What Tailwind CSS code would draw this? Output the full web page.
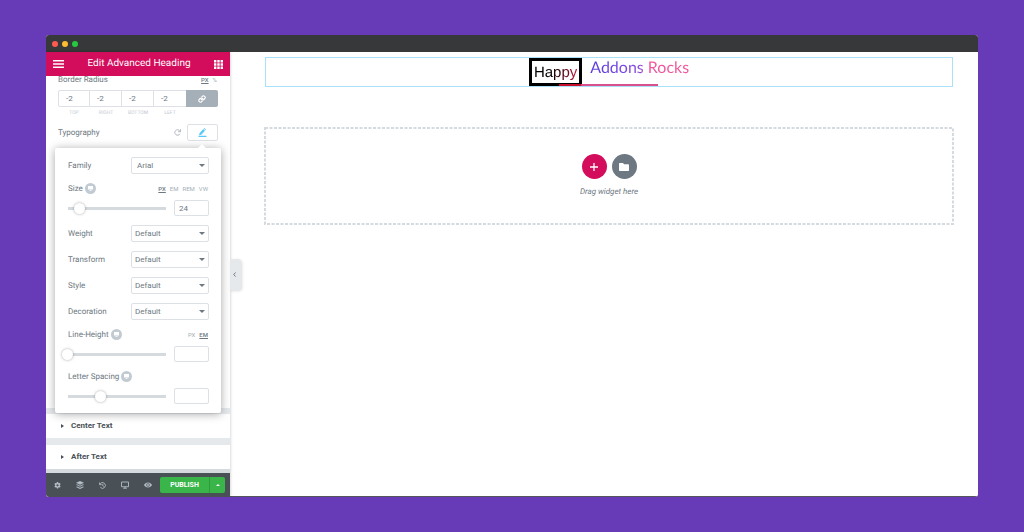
<!DOCTYPE html>
<html lang="en">
<head>
    <meta charset="UTF-8">
    <meta name="viewport" content="width=device-width, initial-scale=1.0">
    <title>Edit Advanced Heading</title>
    <script src="https://cdn.jsdelivr.net/npm/@tailwindcss/browser@4"></script>
</head>
<body class="flex min-h-screen bg-[#673ab7] px-[46px] py-[35px] font-[Roboto,sans-serif] text-[8px] leading-[12px] text-[#6d7882] [text-rendering:geometricPrecision]">
    <div class="flex flex-1 flex-col overflow-hidden rounded-[3px] bg-white">
        <!-- window bar -->
        <div class="flex h-[17px] items-center gap-[4px] bg-[#37383a] pl-[6px]">
            <span class="size-[6px] rounded-full bg-[#ff5a52]"></span>
            <span class="size-[6px] rounded-full bg-[#fdbc2e]"></span>
            <span class="size-[6px] rounded-full bg-[#27c840]"></span>
        </div>

        <div class="flex flex-1">
            <!-- editor panel -->
            <aside class="relative z-10 flex w-[184px] flex-col bg-white shadow-[0_0_3px_rgba(0,0,0,0.25)]">
                <header class="z-10 flex h-[24px] items-center justify-between bg-[#d30c5c] px-[7px] text-white">
                    <button aria-label="Menu">
                        <svg class="h-[8px] w-[11px]" viewBox="0 0 11 8" fill="currentColor"><path d="M0 0h11v1.500H0zM0 3.200h11v1.500H0zM0 6.400h11v1.500H0z"/></svg>
                    </button>
                    <h1 class="text-[10px]">Edit Advanced Heading</h1>
                    <button aria-label="Widgets">
                        <svg class="size-[9px]" viewBox="0 0 9 9" fill="currentColor"><path d="M0 0h2.400v2.400H0zM3.300 0h2.400v2.400H3.300zM6.600 0H9v2.400H6.600zM0 3.300h2.400v2.400H0zM3.300 3.300h2.400v2.400H3.300zM6.600 3.300H9v2.400H6.600zM0 6.600h2.400V9H0zM3.300 6.600h2.400V9H3.300zM6.600 6.600H9V9H6.600z"/></svg>
                    </button>
                </header>

                <section class="-mt-[2px] h-[334px] px-[12px]">
                    <div class="flex h-[12px] items-center justify-between">
                        <span>Border Radius</span>
                        <span class="flex gap-[4px] pr-[1px] text-[6px] text-[#a4afb7]">
                            <button class="font-medium text-[#6d7882] underline">PX</button>
                            <button>%</button>
                        </span>
                    </div>
                    <div class="mt-[4px] grid grid-cols-5 text-center text-[5px] leading-[12px] text-[#c2cbd2]">
                        <label><input class="block h-[17px] w-full rounded-l-[2px] border border-[#dde1e5] pl-[7px] text-[8px] text-[#6d7882]" value="-2">TOP</label>
                        <label><input class="block h-[17px] w-full border-y border-r border-[#dde1e5] pl-[7px] text-[8px] text-[#6d7882]" value="-2">RIGHT</label>
                        <label><input class="block h-[17px] w-full border-y border-r border-[#dde1e5] pl-[7px] text-[8px] text-[#6d7882]" value="-2">BOTTOM</label>
                        <label><input class="block h-[17px] w-full border-y border-[#dde1e5] pl-[7px] text-[8px] text-[#6d7882]" value="-2">LEFT</label>
                        <button class="flex h-[17px] items-center justify-center rounded-r-[2px] bg-[#a4afb7] text-white" aria-label="Link values">
                            <svg class="size-[8px]" viewBox="0 0 24 24" fill="none" stroke="currentColor" stroke-width="3.500" stroke-linecap="round"><path d="M10 13a5 5 0 0 0 7.500.5l3-3a5 5 0 0 0-7-7l-1.700 1.700M14 11a5 5 0 0 0-7.500-.5l-3 3a5 5 0 0 0 7 7l1.700-1.700"/></svg>
                        </button>
                    </div>

                    <div class="relative mt-[5px] flex h-[17px] items-center">
                        <span class="flex-1">Typography</span>
                        <button class="mr-[6px] text-[#a4afb7]" aria-label="Reset">
                            <svg class="size-[7px]" viewBox="0 0 14 14" fill="none" stroke="currentColor" stroke-width="1.700"><path d="M12 9.500A5.500 5.500 0 1 1 11.500 3.600"/><path d="M13 .5v5H8"/></svg>
                        </button>
                        <button class="flex h-[17px] w-[31px] items-center justify-center rounded-[2px] border border-[#dde1e5] text-[#5bc8f5]" aria-label="Edit typography">
                            <svg class="size-[9px]" viewBox="0 0 18 18" fill="currentColor"><path d="M3 10.500 10.500 2l3.500 3.500L6.500 13.500l-4.300.8zM11.300 1.200 12.500 0 16 3.500l-1.200 1.200zM1 15.500h16V18H1z"/></svg>
                        </button>

                        <!-- typography popover -->
                        <div class="absolute top-[24px] -right-[3px] -left-[3px] flex flex-col gap-[9px] rounded-[2px] bg-white py-[9px] pr-[12px] pl-[13px] shadow-[0_1px_10px_rgba(0,0,0,0.35)]">
                            <span class="absolute -top-[4px] right-[14px] border-x-[5px] border-b-[5px] border-x-transparent border-b-white"></span>
                            <div class="flex h-[17px] items-center justify-between">
                                <label for="family">Family</label>
                                <span class="relative">
                                    <select id="family" class="block h-[17px] w-[78px] appearance-none rounded-[2px] border border-[#dde1e5] bg-white pl-[5px]"><option>Arial</option></select>
                                    <span class="pointer-events-none absolute top-[7px] right-[4px] border-x-[3px] border-t-[3px] border-x-transparent border-t-[#6d7882]"></span>
                                </span>
                            </div>

                            <div>
                                <div class="flex h-[11px] items-center">
                                    <label for="size">Size</label>
                                    <button class="ml-[2px] flex size-[11px] items-center justify-center rounded-full bg-[#c2cbd2] text-white" aria-label="Device">
                                        <svg class="size-[5px]" viewBox="0 0 10 10" fill="currentColor"><path d="M0 0h10v7H0zM3 8h4v1.500H3z"/></svg>
                                    </button>
                                    <span class="ml-auto flex gap-[4px] pr-[1px] text-[6px] text-[#a4afb7]">
                                        <button class="font-medium text-[#6d7882] underline">PX</button>
                                        <button>EM</button>
                                        <button>REM</button>
                                        <button>VW</button>
                                    </span>
                                </div>
                                <div class="mt-[6px] flex h-[16px] items-center justify-between">
                                    <input id="size" type="range" value="12" class="-ml-[6px] h-[13px] w-[110px] appearance-none bg-[linear-gradient(#d5dadf,#d5dadf)] bg-[length:98px_3px] bg-center bg-no-repeat [&::-webkit-slider-thumb]:size-[11px] [&::-webkit-slider-thumb]:appearance-none [&::-webkit-slider-thumb]:rounded-full [&::-webkit-slider-thumb]:bg-white [&::-webkit-slider-thumb]:shadow-[0_0_3px_rgba(0,0,0,0.35)]">
                                    <input aria-label="Size value" value="24" class="h-[16px] w-[35px] rounded-[2px] border border-[#dde1e5] px-[4px]">
                                </div>
                            </div>

                            <div class="flex h-[17px] items-center justify-between">
                                <label for="weight">Weight</label>
                                <span class="relative">
                                    <select id="weight" class="block h-[17px] w-[78px] appearance-none rounded-[2px] border border-[#dde1e5] bg-white pl-[3px]"><option>Default</option></select>
                                    <span class="pointer-events-none absolute top-[7px] right-[4px] border-x-[3px] border-t-[3px] border-x-transparent border-t-[#6d7882]"></span>
                                </span>
                            </div>
                            <div class="flex h-[17px] items-center justify-between">
                                <label for="transform">Transform</label>
                                <span class="relative">
                                    <select id="transform" class="block h-[17px] w-[78px] appearance-none rounded-[2px] border border-[#dde1e5] bg-white pl-[3px]"><option>Default</option></select>
                                    <span class="pointer-events-none absolute top-[7px] right-[4px] border-x-[3px] border-t-[3px] border-x-transparent border-t-[#6d7882]"></span>
                                </span>
                            </div>
                            <div class="flex h-[17px] items-center justify-between">
                                <label for="style">Style</label>
                                <span class="relative">
                                    <select id="style" class="block h-[17px] w-[78px] appearance-none rounded-[2px] border border-[#dde1e5] bg-white pl-[3px]"><option>Default</option></select>
                                    <span class="pointer-events-none absolute top-[7px] right-[4px] border-x-[3px] border-t-[3px] border-x-transparent border-t-[#6d7882]"></span>
                                </span>
                            </div>
                            <div class="flex h-[17px] items-center justify-between">
                                <label for="decoration">Decoration</label>
                                <span class="relative">
                                    <select id="decoration" class="block h-[17px] w-[78px] appearance-none rounded-[2px] border border-[#dde1e5] bg-white pl-[3px]"><option>Default</option></select>
                                    <span class="pointer-events-none absolute top-[7px] right-[4px] border-x-[3px] border-t-[3px] border-x-transparent border-t-[#6d7882]"></span>
                                </span>
                            </div>

                            <div>
                                <div class="flex h-[11px] items-center">
                                    <label for="line-height">Line-Height</label>
                                    <button class="ml-[2px] flex size-[11px] items-center justify-center rounded-full bg-[#c2cbd2] text-white" aria-label="Device">
                                        <svg class="size-[5px]" viewBox="0 0 10 10" fill="currentColor"><path d="M0 0h10v7H0zM3 8h4v1.500H3z"/></svg>
                                    </button>
                                    <span class="ml-auto flex gap-[4px] pr-[1px] text-[6px] text-[#a4afb7]">
                                        <button>PX</button>
                                        <button class="font-medium text-[#6d7882] underline">EM</button>
                                    </span>
                                </div>
                                <div class="mt-[6px] flex h-[16px] items-center justify-between">
                                    <input id="line-height" type="range" value="0" class="-ml-[6px] h-[13px] w-[110px] appearance-none bg-[linear-gradient(#d5dadf,#d5dadf)] bg-[length:98px_3px] bg-center bg-no-repeat [&::-webkit-slider-thumb]:size-[11px] [&::-webkit-slider-thumb]:appearance-none [&::-webkit-slider-thumb]:rounded-full [&::-webkit-slider-thumb]:bg-white [&::-webkit-slider-thumb]:shadow-[0_0_3px_rgba(0,0,0,0.35)]">
                                    <input aria-label="Line-Height value" class="h-[16px] w-[35px] rounded-[2px] border border-[#dde1e5] px-[4px]">
                                </div>
                            </div>

                            <div>
                                <div class="flex h-[11px] items-center">
                                    <label for="letter-spacing">Letter Spacing</label>
                                    <button class="ml-[2px] flex size-[11px] items-center justify-center rounded-full bg-[#c2cbd2] text-white" aria-label="Device">
                                        <svg class="size-[5px]" viewBox="0 0 10 10" fill="currentColor"><path d="M0 0h10v7H0zM3 8h4v1.500H3z"/></svg>
                                    </button>
                                </div>
                                <div class="mt-[6px] flex h-[16px] items-center justify-between">
                                    <input id="letter-spacing" type="range" value="33" class="-ml-[6px] h-[13px] w-[110px] appearance-none bg-[linear-gradient(#d5dadf,#d5dadf)] bg-[length:98px_3px] bg-center bg-no-repeat [&::-webkit-slider-thumb]:size-[11px] [&::-webkit-slider-thumb]:appearance-none [&::-webkit-slider-thumb]:rounded-full [&::-webkit-slider-thumb]:bg-white [&::-webkit-slider-thumb]:shadow-[0_0_3px_rgba(0,0,0,0.35)]">
                                    <input aria-label="Letter Spacing value" class="h-[16px] w-[35px] rounded-[2px] border border-[#dde1e5] px-[4px]">
                                </div>
                            </div>
                        </div>
                    </div>
                </section>

                <button class="flex h-[30px] items-center gap-[7px] border-t-[6px] border-[#e6e9ec] px-[15px] font-bold text-[#495157]">
                    <span class="border-y-[2px] border-l-[3px] border-y-transparent border-l-[#495157]"></span>Center Text
                </button>
                <button class="flex h-[31px] items-center gap-[7px] border-t-[7px] border-[#e6e9ec] px-[15px] font-bold text-[#495157]">
                    <span class="border-y-[2px] border-l-[3px] border-y-transparent border-l-[#495157]"></span>After Text
                </button>

                <footer class="flex flex-1 items-center border-t-[4px] border-[#d5dadf] bg-[#495157] pr-[5px] text-[#b4bdc5]">
                    <div class="flex flex-1 items-center justify-between px-[8px]">
                        <button aria-label="Settings">
                            <svg class="size-[7px]" viewBox="0 0 16 16" fill="currentColor" fill-rule="evenodd"><path d="M6.500 0h3l.5 2.300 1.400.8 2.200-.7 1.500 2.600-1.700 1.600v1.800l1.700 1.600-1.500 2.600-2.200-.7-1.400.8-.5 2.300h-3L6 12.700l-1.400-.8-2.200.7L.9 10l1.700-1.600V6.600L.9 5l1.500-2.600 2.200.7L6 2.300zM8 5a2.500 2.500 0 1 0 0 5 2.500 2.500 0 0 0 0-5z"/></svg>
                        </button>
                        <button aria-label="Navigator">
                            <svg class="size-[8px]" viewBox="0 0 16 16" fill="currentColor"><path d="M8 0l8 3.700-8 3.700-8-3.700zM2 6.700l6 2.800 6-2.800 2 1-8 3.800-8-3.800zM2 10.900l6 2.800 6-2.800 2 1L8 16l-8-4.100z"/></svg>
                        </button>
                        <button aria-label="History">
                            <svg class="size-[7px]" viewBox="0 0 16 16" fill="none" stroke="currentColor" stroke-width="2"><path d="M2.500 4.500a6.500 6.500 0 1 1 .5 7.500M8.500 4.500v4l2.500 1.500"/><path d="M1 1v5h5"/></svg>
                        </button>
                        <button aria-label="Responsive mode">
                            <svg class="size-[8px]" viewBox="0 0 16 16" fill="none" stroke="currentColor" stroke-width="1.800"><path d="M1 2h14v9.500H1zM8 11v3M4.500 14.500h7"/></svg>
                        </button>
                        <button aria-label="Preview">
                            <svg class="size-[8px]" viewBox="0 0 16 16" fill="currentColor" fill-rule="evenodd"><path d="M8 3c3.500 0 6.500 2 8 5-1.500 3-4.500 5-8 5S1.500 11 0 8c1.500-3 4.500-5 8-5zm0 1.500a3.500 3.500 0 1 0 0 7 3.500 3.500 0 0 0 0-7zM8 6a2 2 0 1 1 0 4 2 2 0 0 1 0-4z"/></svg>
                        </button>
                    </div>
                    <button class="h-[16px] w-[49px] rounded-l-[2px] bg-[#39b54a] text-[7px] font-bold text-white">PUBLISH</button>
                    <button class="flex h-[16px] w-[16px] items-center justify-center rounded-r-[2px] border-l border-[#319a3f] bg-[#39b54a]" aria-label="Save options">
                        <span class="border-x-[2px] border-b-[2px] border-x-transparent border-b-white"></span>
                    </button>
                </footer>

                <button class="absolute top-[207px] left-full flex h-[31px] w-[11px] items-center justify-center rounded-r-[3px] bg-[#e6e9ec] pr-[2px] shadow-[1px_1px_3px_rgba(0,0,0,0.15)]" aria-label="Hide panel">
                    <svg class="h-[5px] w-[3px]" viewBox="0 0 6 10" fill="none" stroke="currentColor" stroke-width="2"><path d="M5 1 1.500 5 5 9"/></svg>
                </button>
            </aside>

            <!-- preview -->
            <main class="flex-1 border-b border-[#55565a] pt-[5px] pr-[25px] pl-[35px]">
                <div class="flex h-[30px] justify-center border border-[#a9e2f8]">
                    <h2 class="relative flex items-start">
                        <span class="h-[28px] border-[3px] border-black px-[2px] font-[Liberation_Sans,sans-serif] text-[15px] leading-[23px]"><span class="bg-linear-to-r from-black from-30% to-[#c01c3c] bg-clip-text text-transparent">Happy</span></span>
                        <span class="ml-[8px] bg-linear-to-r from-[#5f3de0] from-10% via-[#8a4be0] via-50% to-[#f0569c] to-60% bg-clip-text font-[Lato,sans-serif] text-[16px] leading-[19px] text-transparent">Addons Rocks</span>
                        <span class="absolute bottom-0 left-[30px] h-[2px] w-[99px] bg-linear-to-r from-[#c8102e] from-22% to-[#d9508f] to-23%"></span>
                    </h2>
                </div>

                <div class="relative mt-[41px] flex h-[96px] flex-col items-center justify-center">
                    <!-- dashed drop area outline -->
                    <svg class="absolute inset-0 size-full overflow-visible" fill="none" stroke="#d5dadf" stroke-width="2" stroke-dasharray="3 1.500"><rect width="100%" height="100%"/></svg>
                    <div class="relative flex gap-[5px] text-white">
                        <button class="flex size-[25px] items-center justify-center rounded-full bg-[#d30c5c]" aria-label="Add section">
                            <svg class="size-[8px]" viewBox="0 0 8 8" stroke="currentColor" stroke-width="1.300"><path d="M4 0v8M0 4h8"/></svg>
                        </button>
                        <button class="flex size-[25px] items-center justify-center rounded-full bg-[#6d7882]" aria-label="Add template">
                            <svg class="h-[8px] w-[10px]" viewBox="0 0 10 8" fill="currentColor"><path d="M.8 0h3.200l1 1.200h4.200q.8 0 .8.8v5.200q0 .8-.8.8H.8Q0 8 0 7.200V.8Q0 0 .8 0z"/></svg>
                        </button>
                    </div>
                    <p class="mt-[7px] italic">Drag widget here</p>
                </div>
            </main>
        </div>
    </div>
</body>
</html>
